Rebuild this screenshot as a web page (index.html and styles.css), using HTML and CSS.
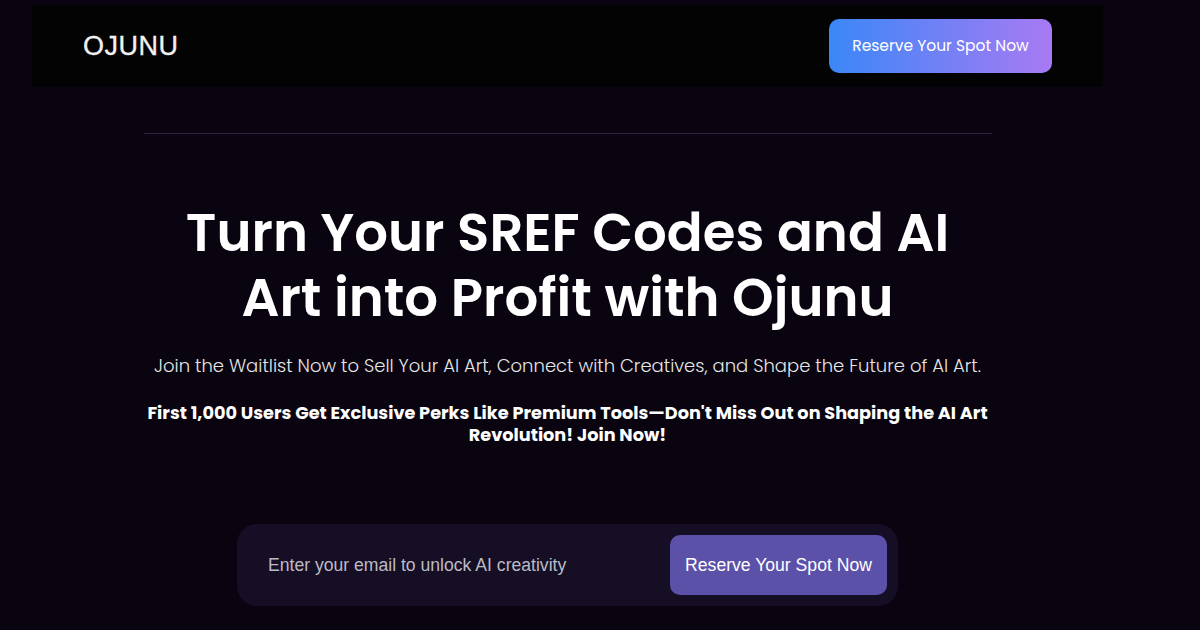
FILE: index.html
```html
<!DOCTYPE html>
<html lang="en">
<head>
    <meta charset="UTF-8">
    <meta name="viewport" content="width=device-width, initial-scale=1.0">
    <title>Ojunu - Waitlist</title>
    <link rel="stylesheet" href="styles.css">
</head>
<body>
    <div class="page">
        <header class="header">
            <div class="logo">OJUNU</div>
            <button class="header-btn">Reserve Your Spot Now</button>
        </header>

        <div class="divider"></div>

        <section class="hero">
            <h1>Turn Your SREF Codes and AI<br>Art into Profit with Ojunu</h1>
            <p class="subtitle">Join the Waitlist Now to Sell Your AI Art, Connect with Creatives, and Shape the Future of AI Art.</p>
            <p class="perks">First 1,000 Users Get Exclusive Perks Like Premium Tools—Don't Miss Out on Shaping the AI Art Revolution! Join Now!</p>

            <form class="signup" onsubmit="return false">
                <input type="email" placeholder="Enter your email to unlock AI creativity">
                <button type="submit">Reserve Your Spot Now</button>
            </form>
        </section>
    </div>
</body>
</html>
```

FILE: styles.css
```css
* {
    box-sizing: border-box;
    margin: 0;
    padding: 0;
}

body {
    font-family: "Poppins", "DejaVu Sans", sans-serif;
    background-color: #09040f;
    color: #ffffff;
    min-height: 100vh;
    overflow: hidden;
}

.page {
    width: 1071px;
    margin-left: 32px;
    padding-top: 5px;
}

.header {
    display: flex;
    justify-content: space-between;
    align-items: center;
    height: 82px;
    padding: 0 51px;
    background: #030303;
}

.logo {
    font-family: "Liberation Sans", Arial, sans-serif;
    font-size: 27px;
    letter-spacing: 0.5px;
    color: #f2f2f2;
    -webkit-text-stroke: 0.3px #f2f2f2;
}

.header-btn {
    width: 223px;
    height: 54px;
    margin-top: -1px;
    border: none;
    border-radius: 10px;
    background: linear-gradient(90deg, #3b87f7, #a87af3);
    color: #ffffff;
    font-family: inherit;
    font-size: 15.5px;
    cursor: pointer;
}

.divider {
    width: 848px;
    height: 1px;
    margin: 46px auto 0;
    background: #2a2344;
}

.hero {
    text-align: center;
    padding-top: 66px;
}

.hero h1 {
    font-size: 53px;
    font-weight: 600;
    line-height: 65px;
}

.subtitle {
    margin-top: 22px;
    font-size: 18px;
    font-weight: 300;
    color: #e6e6e6;
}

.perks {
    width: 860px;
    margin: 23px auto 0;
    font-size: 17.7px;
    font-weight: 700;
    line-height: 22px;
}

.signup {
    display: flex;
    align-items: center;
    justify-content: space-between;
    width: 661px;
    height: 82px;
    margin: 78px 0 0 205px;
    padding: 0 11px 0 31px;
    background: #150e24;
    border-radius: 20px;
}

.signup input {
    flex: 1;
    border: none;
    outline: none;
    background: transparent;
    font-family: "Liberation Sans", Arial, sans-serif;
    font-size: 17.6px;
    color: #ffffff;
}

.signup input::placeholder {
    color: #bdbac4;
}

.signup button {
    width: 217px;
    height: 60px;
    border: none;
    border-radius: 10px;
    background: #5b51a9;
    color: #ffffff;
    font-family: "Liberation Sans", Arial, sans-serif;
    font-size: 17.6px;
    cursor: pointer;
}
```
